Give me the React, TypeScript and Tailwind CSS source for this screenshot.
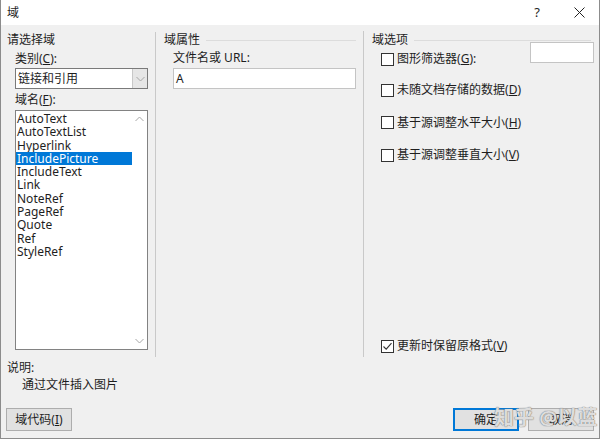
import React from 'react';

const items = [
  'AutoText',
  'AutoTextList',
  'Hyperlink',
  'IncludePicture',
  'IncludeText',
  'Link',
  'NoteRef',
  'PageRef',
  'Quote',
  'Ref',
  'StyleRef',
];

function Chevron({ up = false }: { up?: boolean }) {
  return (
    <svg width="9" height="6" viewBox="0 0 9 6" className="block">
      <path
        d={up ? 'M0.5 5 L4.5 1 L8.5 5' : 'M0.5 1 L4.5 5 L8.5 1'}
        fill="none"
        stroke="#a6a6a6"
        strokeWidth="1"
      />
    </svg>
  );
}

function CheckBox({ checked = false }: { checked?: boolean }) {
  return (
    <span className="w-[13px] h-[13px] border border-[#333] bg-white flex items-center justify-center shrink-0">
      {checked && (
        <svg width="11" height="11" viewBox="0 0 11 11">
          <path d="M1.5 5.5 L4.2 8.2 L9.5 2.2" fill="none" stroke="#333" strokeWidth="1.1" />
        </svg>
      )}
    </span>
  );
}

function Option({ label, mn, rest = '', checked = false }: { label: string; mn: string; rest?: string; checked?: boolean }) {
  return (
    <label className="flex items-center gap-[3px] h-4">
      <CheckBox checked={checked} />
      <span>
        {label}(<u>{mn}</u>){rest}
      </span>
    </label>
  );
}

function GroupHeader({ title }: { title: string }) {
  return (
    <div className="flex items-center h-4 gap-[6px]">
      <span>{title}</span>
      <div className="flex-1 h-px bg-[#dcdcdc]" />
    </div>
  );
}

export default function App() {
  return (
    <div className="relative w-[600px] h-[439px] flex flex-col bg-[#f0f0f0] border-x border-b border-[#8c8c8c] text-[12px] text-[#1e1e1e] font-['Noto_Sans','Noto_Sans_CJK_SC',sans-serif] overflow-hidden">
      {/* title bar */}
      <div className="h-[25px] bg-white flex items-center pl-[6px] shrink-0">
        <span className="flex-1">域</span>
        <span className="w-[20px] text-center mr-[27px] text-[13px]">?</span>
        <svg width="11" height="11" viewBox="0 0 11 11" className="mr-[14px]">
          <path d="M0.5 0.5 L10.5 10.5 M10.5 0.5 L0.5 10.5" stroke="#222" strokeWidth="1" />
        </svg>
      </div>

      {/* groups */}
      <div className="flex h-[333px] shrink-0">
        {/* left */}
        <div className="w-[154px] pt-[7px] flex flex-col">
          <div className="h-4 pl-[6px] flex items-center">请选择域</div>
          <div className="h-4 pl-[14px] mt-[3px] flex items-center">
            类别(<u>C</u>):
          </div>
          <div className="ml-[14px] mt-px w-[133px] h-[21px] border border-[#7a7a7a] bg-white flex">
            <span className="flex-1 pl-[2px] flex items-center">链接和引用</span>
            <span className="w-[15px] bg-[#e6e6e6] border-l border-[#c8c8c8] flex items-center justify-center">
              <Chevron />
            </span>
          </div>
          <div className="h-4 pl-[14px] mt-[3px] flex items-center">
            域名(<u>F</u>):
          </div>
          <div className="ml-[14px] mt-[2px] w-[133px] h-[240px] border border-[#828282] bg-white flex">
            <div className="flex-1 pt-[1px] flex flex-col">
              {items.map((it) => (
                <div
                  key={it}
                  className={`h-[13.3px] leading-[13.3px] pl-[1px] ${
                    it === 'IncludePicture' ? 'bg-[#0078d7] text-white' : ''
                  }`}
                >
                  {it}
                </div>
              ))}
            </div>
            <div className="w-[15px] flex flex-col justify-between items-center py-[5px]">
              <Chevron up />
              <Chevron />
            </div>
          </div>
        </div>

        <div className="w-px bg-[#c9c9c9] mt-[7px] mb-[1px]" />

        {/* middle */}
        <div className="w-[207px] pt-[7px] pl-[8px] pr-[7px] flex flex-col">
          <GroupHeader title="域属性" />
          <div className="h-4 pl-[9px] mt-[2px] flex items-center">文件名或 URL:</div>
          <div className="ml-[9px] mt-[2px] h-[21px] border border-[#c4c4c4] bg-white pl-[2px] flex items-center">A</div>
        </div>

        <div className="w-px bg-[#c9c9c9] mt-[6px] mb-[1px]" />

        {/* right */}
        <div className="flex-1 pt-[7px] pl-[8px] pr-[8px] flex flex-col">
          <GroupHeader title="域选项" />
          <div className="pl-[9px] mt-[3px] flex items-center justify-between">
            <Option label="图形筛选器" mn="G" rest=":" />
            <div className="w-[64px] h-[21px] -mt-[13px] -mr-[3px] border border-[#c4c4c4] bg-white" />
          </div>
          <div className="pl-[9px] mt-[15px] flex flex-col gap-[16.5px]">
            <Option label="未随文档存储的数据" mn="D" />
            <Option label="基于源调整水平大小" mn="H" />
            <Option label="基于源调整垂直大小" mn="V" />
          </div>
          <div className="flex-1" />
          <div className="pl-[9px] mb-[4px]">
            <Option label="更新时保留原格式" mn="V" checked />
          </div>
        </div>
      </div>

      {/* description */}
      <div className="pl-[6px] h-4 mt-[2px] flex items-center">说明:</div>
      <div className="pl-[21px] h-4 mt-[1px] flex items-center">通过文件插入图片</div>

      {/* buttons */}
      <div className="flex items-center mt-[15px] px-[5px]">
        <button className="w-[66px] h-[23px] bg-[#e1e1e1] border border-[#adadad] flex items-center justify-center">
          域代码(<u>I</u>)
        </button>
        <div className="flex-1" />
        <button className="w-[66px] h-[23px] bg-[#e1e1e1] border-2 border-[#0078d7] flex items-center justify-center">
          确定
        </button>
        <button className="ml-[9px] w-[66px] h-[23px] bg-[#e1e1e1] border border-[#adadad] flex items-center justify-center">
          取消
        </button>
      </div>

      {/* watermark */}
      <div className="absolute left-[493px] top-[406px] whitespace-nowrap leading-[24px] text-[20px] font-bold text-white/75 pointer-events-none [text-shadow:0_0_1px_#777,0_0_1px_#777]">
        知乎 @以蓝
      </div>
    </div>
  );
}
